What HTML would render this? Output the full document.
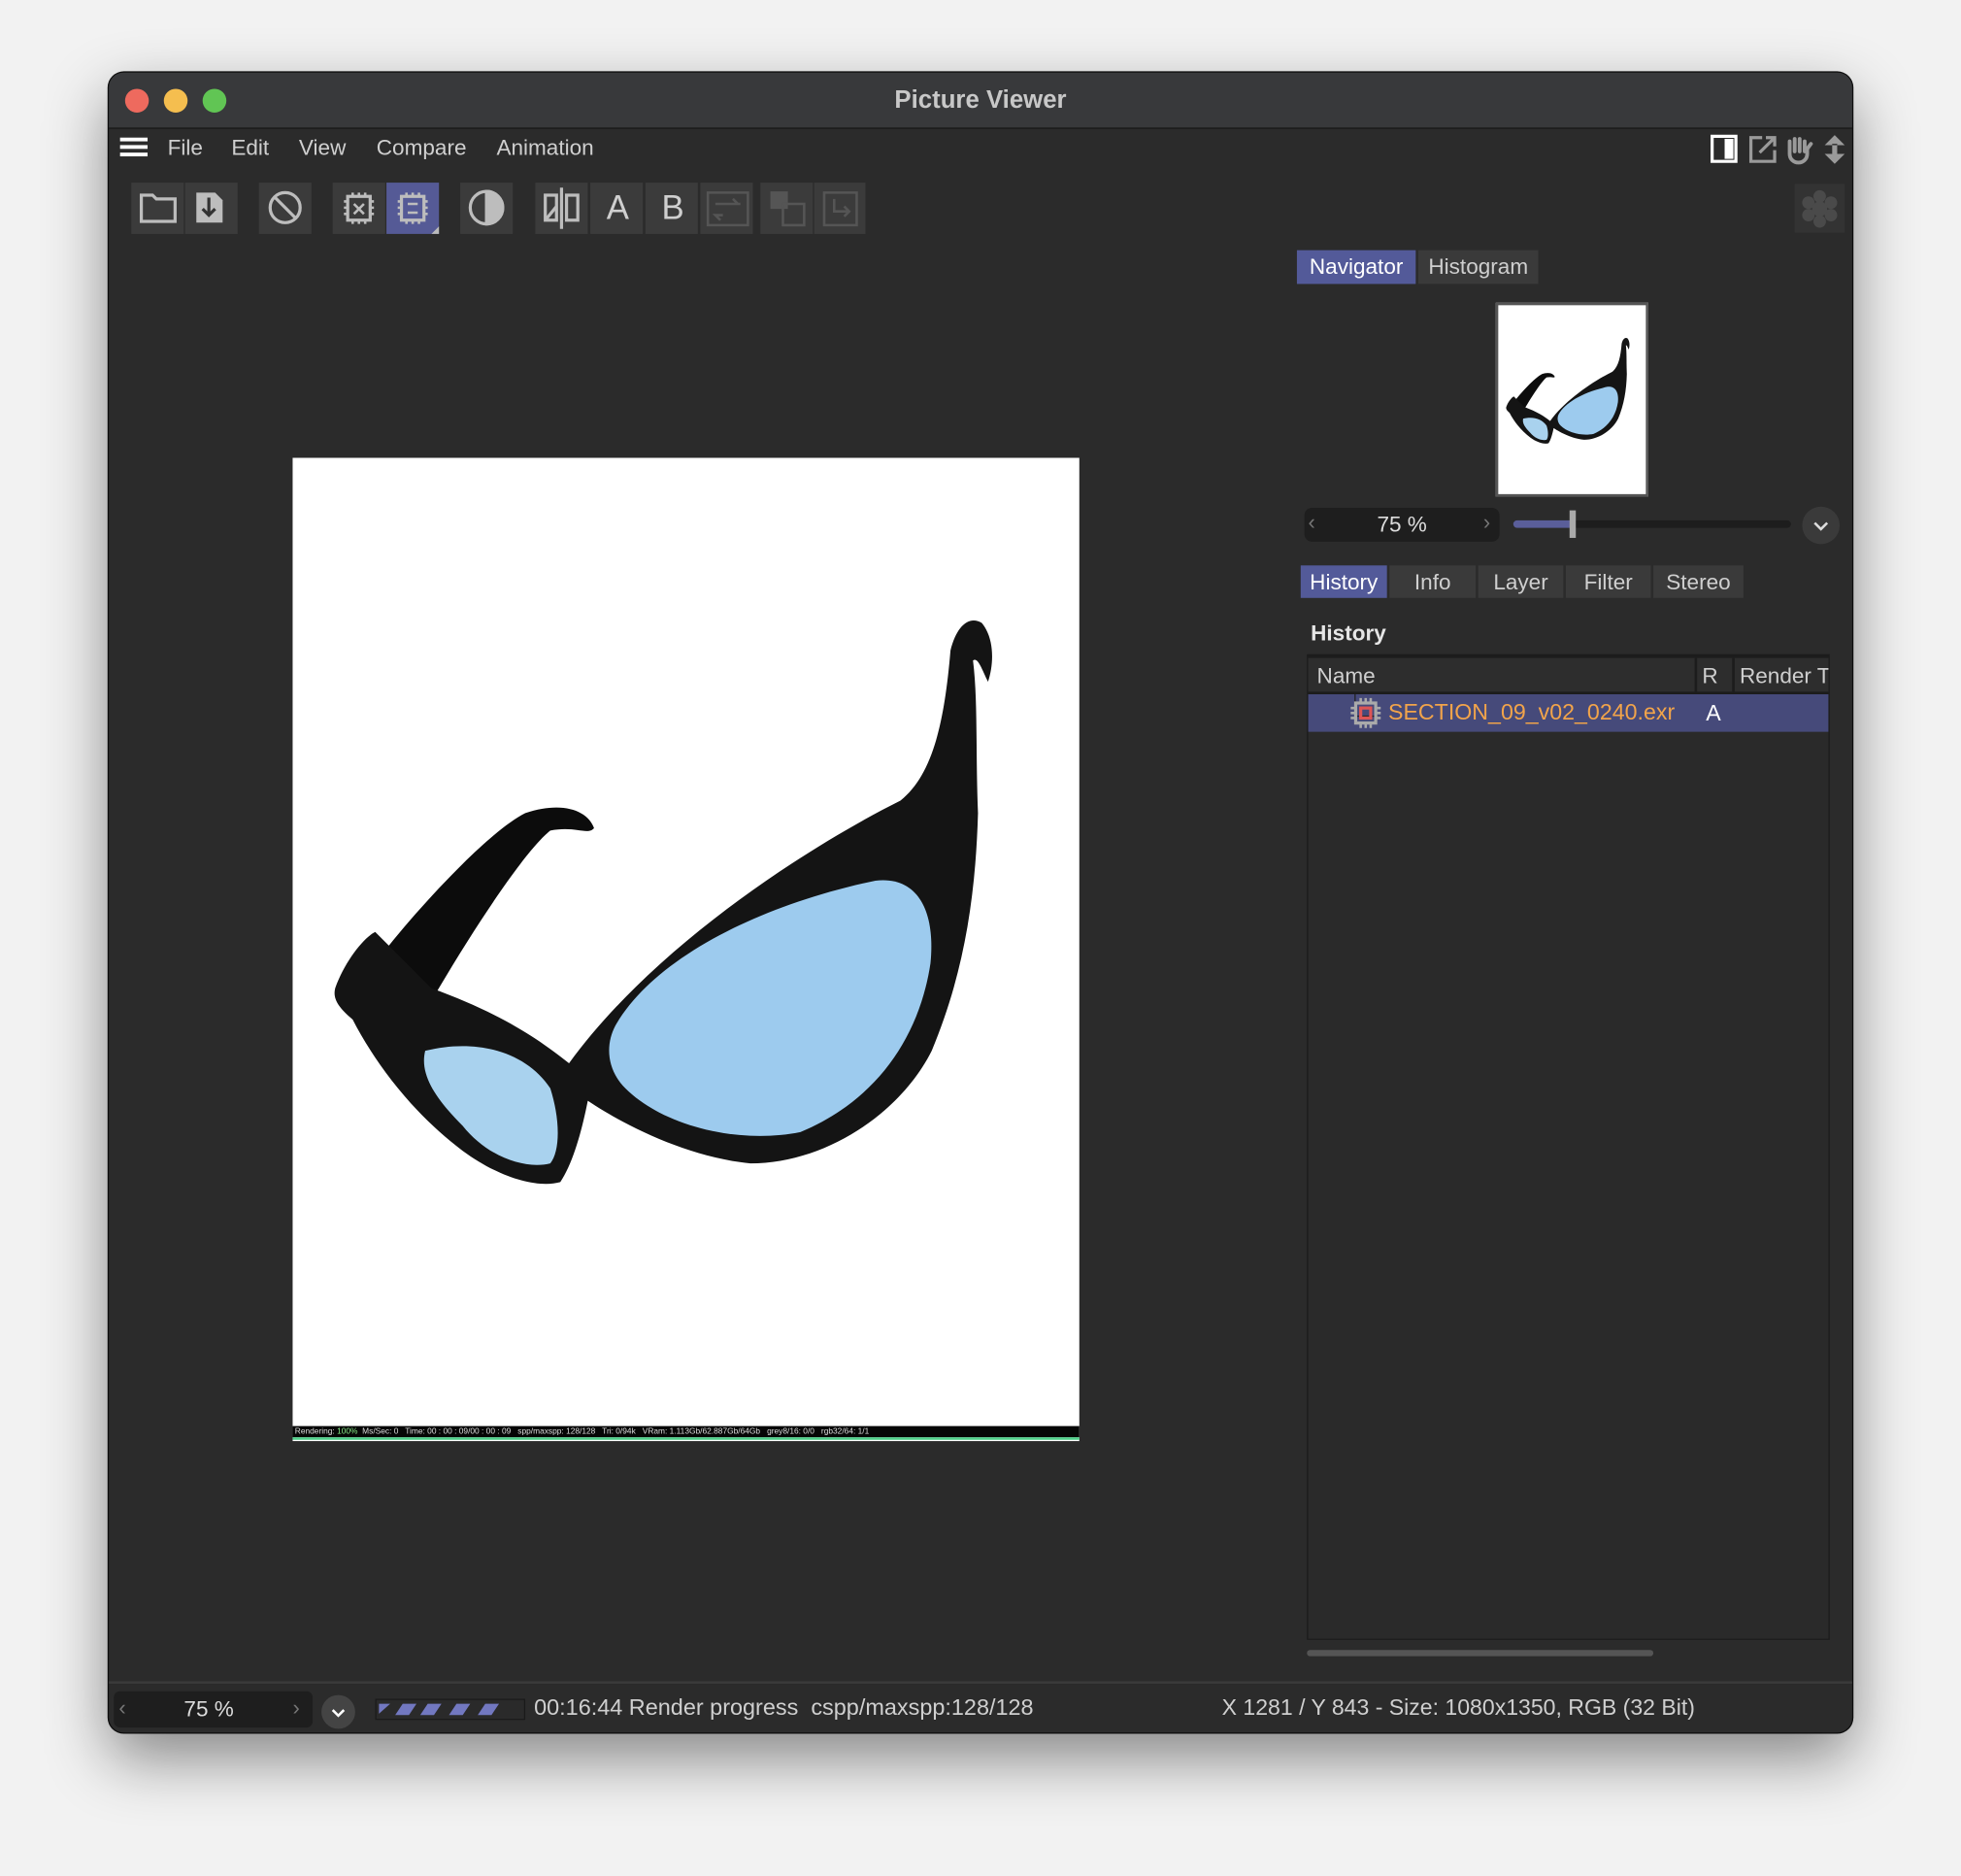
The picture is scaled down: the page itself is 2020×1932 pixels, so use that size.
<!DOCTYPE html>
<html><head><meta charset="utf-8"><style>
html,body{margin:0;padding:0;width:2020px;height:1932px;overflow:hidden;background:#f2f2f2;}
#s{position:absolute;left:0;top:0;width:1568px;height:1500px;transform:scale(1.28827);transform-origin:0 0;font-family:"Liberation Sans",sans-serif;}
.a{position:absolute;}
.win{left:87px;top:58px;width:1394px;height:1327px;border-radius:12px;background:#2b2b2b;box-shadow:0 20px 50px rgba(0,0,0,.45),0 0 0 1px #111;overflow:hidden;}
.t{color:#cfcfcf;font-size:17.5px;white-space:nowrap;}
.btn{background:#3b3b3b;height:41px;top:146px;}
.tab{height:26px;background:#3a3a3a;color:#cfcfcf;font-size:17.5px;text-align:center;line-height:26px;}
.on{background:#535a99;color:#fff;}
</style></head><body><div id="s">
<div class="a win">
 <div class="a" style="left:0;top:0;width:1394px;height:44px;background:#38393b;border-bottom:1px solid #151515"></div>
 <div class="a" style="left:13px;top:13px;width:19px;height:19px;border-radius:50%;background:#ee6a5e"></div>
 <div class="a" style="left:44px;top:13px;width:19px;height:19px;border-radius:50%;background:#f5be4f"></div>
 <div class="a" style="left:75px;top:13px;width:19px;height:19px;border-radius:50%;background:#61c554"></div>
 <div class="a" style="left:0;top:11px;width:1394px;text-align:center;color:#c8c8c8;font-size:20px;font-weight:bold">Picture Viewer</div>
</div>
<!-- menu -->
<div class="a" style="left:96px;top:110px;width:22px;height:3px;background:#fff;box-shadow:0 6px 0 #fff,0 12px 0 #fff"></div>
<div class="a t" style="left:134px;top:108px">File</div>
<div class="a t" style="left:185px;top:108px">Edit</div>
<div class="a t" style="left:239px;top:108px">View</div>
<div class="a t" style="left:301px;top:108px">Compare</div>
<div class="a t" style="left:397px;top:108px">Animation</div>
<!-- toolbar -->
<div class="a btn" style="left:105px;width:42px"></div><div class="a btn" style="left:148px;width:42px"></div>
<div class="a btn" style="left:207px;width:42px"></div>
<div class="a btn" style="left:266px;width:42px"></div><div class="a btn" style="left:309px;width:42px;background:#555a96"></div>
<div class="a btn" style="left:368px;width:42px"></div>
<div class="a btn" style="left:428px;width:42px"></div>
<div class="a btn" style="left:472px;width:42px"></div><div class="a btn" style="left:516px;width:42px"></div><div class="a btn" style="left:560px;width:42px"></div>
<div class="a btn" style="left:608px;width:42px"></div><div class="a btn" style="left:651px;width:41px"></div>
<svg class="a" style="left:0;top:0" width="1568" height="200" fill="none" stroke="#bdbdbd" stroke-width="2.5">
 <path d="M113 156h9l3 3h15v18h-27z"/>
 <path d="M157 154h15l6 6v18h-21z" fill="#bdbdbd" stroke="none"/><path d="M167 158v14M162 167l5 5 5-5" stroke="#333"/>
 <circle cx="228" cy="166" r="12"/><path d="M220 158l16 16"/>
 <rect x="278" y="157" width="18" height="19"/><path d="M283 163l8 8M291 163l-8 8M275 161h3M275 166h3M275 171h3M296 161h3M296 166h3M296 171h3M282 154v3M287 154v3M292 154v3M282 176v3M287 176v3M292 176v3" stroke-width="2"/>
 <rect x="321" y="157" width="18" height="19"/><path d="M326 163h8M326 170h8M318 161h3M318 166h3M318 171h3M339 161h3M339 166h3M339 171h3M325 154v3M330 154v3M335 154v3M325 176v3M330 176v3M335 176v3" stroke-width="2"/>
 <path d="M345 187l6-6v6z" fill="#bbb" stroke="none"/>
 <circle cx="389" cy="166" r="13"/><path d="M389 153a13 13 0 0 1 0 26z" fill="#bdbdbd"/>
 <path d="M449 150v33M445 156h-9v20h9zM453 156h9v20h-9z"/><path d="M436 176l9-11" />
 <path d="M566 154h32v26h-32z M572 163h20M586 159l4 4M578 172h-6l4 4" stroke="#555" stroke-width="2"/>
 <rect x="616" y="153" width="14" height="14" fill="#555" stroke="none"/><rect x="626" y="163" width="17" height="17" stroke="#555" stroke-width="2"/>
 <path d="M659 154h26v26h-26zM667 159v10h12M675 165l4 4-4 4" stroke="#555" stroke-width="2"/>
 <path d="M1369 109h19v20h-19z" stroke="#fff" stroke-width="2.5"/><rect x="1379" y="111" width="7" height="16" fill="#fff" stroke="none"/>
 <path d="M1409 110h-9v19h19v-9M1407 122l12-12M1412 110h7v7" stroke="#9a9a9a"/>
 <path d="M1431 121v-8M1435 121v-10M1439 121v-10M1443 121v-8M1431 118v5c0 4 3 7 7 7s7-3 7-7v-4l3-4" stroke="#9a9a9a" stroke-width="3" stroke-linecap="round"/>
 <path d="M1467 108l-8 8h16zM1467 131l-8-8h16zM1465 115h4v9h-4z" fill="#9a9a9a" stroke="none"/>
</svg>
<div class="a" style="left:485px;top:151px;color:#cfcfcf;font-size:27px">A</div>
<div class="a" style="left:529px;top:151px;color:#cfcfcf;font-size:27px">B</div>
<div class="a" style="left:1435px;top:147px;width:40px;height:39px;background:#333"></div>
<svg class="a" style="left:1435px;top:147px" width="40" height="39"><g fill="#4a4a4a"><circle cx="20" cy="10" r="5"/><circle cx="20" cy="30" r="5"/><circle cx="11" cy="15" r="5"/><circle cx="29" cy="15" r="5"/><circle cx="11" cy="25" r="5"/><circle cx="29" cy="25" r="5"/><circle cx="20" cy="20" r="6"/></g></svg>
<!-- main image -->
<div class="a" style="left:234px;top:366px;width:629px;height:786px;background:#fff"></div>
<div class="a" style="left:234px;top:1140px;width:629px;height:9px;background:#060606;color:#ddd;font-size:6.5px;line-height:9px;white-space:nowrap;overflow:hidden">&nbsp;Rendering: <span style="color:#8e8">100%</span>&nbsp; Ms/Sec: 0 &nbsp; Time: 00 : 00 : 09/00 : 00 : 09 &nbsp; spp/maxspp: 128/128 &nbsp; Tri: 0/94k &nbsp; VRam: 1.113Gb/62.887Gb/64Gb &nbsp; grey8/16: 0/0 &nbsp; rgb32/64: 1/1</div>
<div class="a" style="left:234px;top:1149px;width:629px;height:2px;background:#4fd08a"></div>
<svg class="a" style="left:0;top:0" width="1000" height="1000">
 <defs><g id="gl">
  <path d="M300 770C330 730 390 665 420 650C450 640 470 648 475 662C470 668 460 660 440 664C420 680 380 740 345 800L300 790Z" fill="#0c0c0c"/>
  <path d="M268 790C275 770 290 750 300 745L345 790C400 810 430 830 455 850C520 760 640 680 720 640C745 620 755 580 760 520C765 500 775 492 785 498C795 510 795 530 790 545C785 535 782 525 778 528C782 560 780 600 782 650C780 720 770 780 745 840C720 890 660 930 600 930C550 925 500 900 470 880C465 905 458 930 448 945C430 950 400 942 370 920C330 890 300 850 282 815C270 805 266 798 268 790Z" fill="#141414"/>
  <path d="M492 820C520 770 600 725 700 704C735 700 748 730 744 770C735 830 700 880 640 905C590 915 530 900 500 870C485 855 484 835 492 820Z" fill="#9dcbee"/>
  <path d="M340 840C380 830 420 840 440 870C448 895 448 920 440 930C420 935 390 925 370 900C350 880 335 860 340 840Z" fill="#a9d2ee"/>
 </g></defs>
 <use href="#gl"/>
</svg>
<!-- right panel -->
<div class="a tab on" style="left:1037px;top:200px;width:95px;height:27px;line-height:27px">Navigator</div>
<div class="a tab" style="left:1134px;top:200px;width:96px;height:27px;line-height:27px">Histogram</div>
<div class="a" style="left:1196px;top:242px;width:118px;height:151px;background:#fff;border:2px solid #555;overflow:hidden">
 <svg width="118" height="151" viewBox="234 366 629 786"><use href="#gl"/></svg>
</div>
<div class="a" style="left:1043px;top:406px;width:156px;height:27px;background:#1e1e1e;border-radius:6px"></div>
<div class="a t" style="left:1043px;top:409px;width:156px;text-align:center;color:#ddd">75 %</div>
<div class="a" style="left:1046px;top:408px;color:#777;font-size:17px">‹</div>
<div class="a" style="left:1186px;top:408px;color:#777;font-size:17px">›</div>
<div class="a" style="left:1210px;top:416px;width:222px;height:6px;border-radius:3px;background:#1d1d1d"></div>
<div class="a" style="left:1210px;top:416px;width:48px;height:6px;border-radius:3px;background:#5a5e9a"></div>
<div class="a" style="left:1255px;top:408px;width:5px;height:22px;background:#aaa"></div>
<div class="a" style="left:1441px;top:405px;width:30px;height:30px;border-radius:50%;background:#3a3a3a"></div>
<svg class="a" style="left:1441px;top:405px" width="30" height="30"><path d="M10 13l5 5 5-5" fill="none" stroke="#ddd" stroke-width="2"/></svg>
<div class="a tab on" style="left:1040px;top:452px;width:69px">History</div>
<div class="a tab" style="left:1111px;top:452px;width:69px">Info</div>
<div class="a tab" style="left:1182px;top:452px;width:68px">Layer</div>
<div class="a tab" style="left:1252px;top:452px;width:68px">Filter</div>
<div class="a tab" style="left:1322px;top:452px;width:72px">Stereo</div>
<div class="a t" style="left:1048px;top:496px;font-weight:bold;color:#e6e6e6">History</div>
<div class="a" style="left:1045px;top:523px;width:416px;height:784px;border:1px solid #1c1c1c;border-top:3px solid #1c1c1c;background:#2a2a2a;overflow:hidden">
 <div class="a" style="left:0;top:0;width:416px;height:27px;background:#2d2d2d;border-bottom:2px solid #1c1c1c"></div>
 <div class="a" style="left:309px;top:0;width:2px;height:27px;background:#1c1c1c"></div>
 <div class="a" style="left:339px;top:0;width:2px;height:27px;background:#1c1c1c"></div>
 <div class="a t" style="left:7px;top:4px">Name</div>
 <div class="a t" style="left:315px;top:4px">R</div>
 <div class="a t" style="left:345px;top:4px">Render T</div>
 <div class="a" style="left:0;top:29px;width:416px;height:30px;background:#464a7a"></div>
 <div class="a" style="left:37px;top:29px;width:1px;height:17px;background:#222"></div>
 <div class="a" style="left:37px;top:46px;width:16px;height:1px;background:#222"></div>
 <svg class="a" style="left:32px;top:30px" width="28" height="28"><rect x="6" y="6" width="16" height="16" fill="none" stroke="#aaa" stroke-width="2.5"/><rect x="10" y="10" width="8" height="8" fill="none" stroke="#d55" stroke-width="2.5"/><path d="M10 2v3M14 2v3M18 2v3M10 23v3M14 23v3M18 23v3M2 10h3M2 14h3M2 18h3M23 10h3M23 14h3M23 18h3" stroke="#aaa" stroke-width="2"/></svg>
 <div class="a" style="left:64px;top:33px;color:#f2a44a;font-size:18px;white-space:nowrap">SECTION_09_v02_0240.exr</div>
 <div class="a" style="left:318px;top:34px;color:#fff;font-size:18px">A</div>
</div>
<div class="a" style="left:1045px;top:1319px;width:277px;height:5px;border-radius:3px;background:#555"></div>
<!-- status bar -->
<div class="a" style="left:87px;top:1344px;width:1394px;height:2px;background:#3a3a3a"></div>
<div class="a" style="left:91px;top:1352px;width:159px;height:29px;background:#1e1e1e;border-radius:5px"></div>
<div class="a t" style="left:91px;top:1356px;width:152px;text-align:center;color:#ddd">75 %</div>
<div class="a" style="left:95px;top:1356px;color:#777;font-size:17px">‹</div>
<div class="a" style="left:234px;top:1356px;color:#777;font-size:17px">›</div>
<div class="a" style="left:257px;top:1355px;width:27px;height:27px;border-radius:50%;background:#444"></div>
<svg class="a" style="left:257px;top:1355px" width="27" height="27"><path d="M9 12l4.5 4.5 4.5-4.5" fill="none" stroke="#fff" stroke-width="2"/></svg>
<svg class="a" style="left:300px;top:1358px" width="120" height="17"><rect x="0.5" y="0.5" width="119" height="16" fill="#2a2a2a" stroke="#1a1a1a"/><g fill="#7278c0"><path d="M3 4h9l-9 8z"/><path d="M22 4h11l-6 9h-11z"/><path d="M54 4h11l-6 9h-11z" transform="translate(-12)"/><path d="M65 4h11l-6 9h-11z"/><path d="M97 4h11l-6 9h-11z" transform="translate(-9)"/></g></svg>
<div class="a t" style="left:427px;top:1355px;font-size:18.2px">00:16:44 Render progress&nbsp; cspp/maxspp:128/128</div>
<div class="a t" style="left:977px;top:1355px;font-size:17.9px">X 1281 / Y 843 - Size: 1080x1350, RGB (32 Bit)</div>
</div></body></html>
